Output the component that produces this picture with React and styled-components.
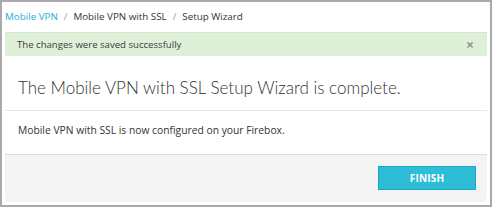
import React from 'react'
import styled, {createGlobalStyle} from 'styled-components'

const GlobalStyle = createGlobalStyle`
  html, body {
    margin: 0;
    padding: 0;
    background: #ffffff;
  }
  * {
    box-sizing: border-box;
  }
`

const Frame = styled.div`
  width: 492px;
  height: 207px;
  border: 2px solid #a9a9a9;
  padding: 0 3px 3px 3px;
  display: flex;
  flex-direction: column;
  font-family: "Open Sans", "Liberation Sans", sans-serif;
  background: #fff;
`

const Breadcrumb = styled.nav`
  height: 30px;
  display: flex;
  align-items: center;
  gap: 6px;
  font-size: 9.8px;
  color: #333;
  padding-bottom: 2px;
`

const Crumb = styled.span`
  color: ${p => (p.link ? '#27aed0' : '#333')};
`

const Sep = styled.span`
  color: #999;
`

const Alert = styled.div`
  height: 24px;
  background: #dff0d8;
  border-top: 1px solid #d2e8c9;
  display: flex;
  align-items: center;
  justify-content: space-between;
  padding: 0 13px 0 12px;
  font-size: 9.6px;
  color: #3a3f3a;
`

const Close = styled.span`
  color: #8e9a8e;
  font-size: 14px;
  font-weight: bold;
  line-height: 1;
`

const Title = styled.h1`
  margin: 0;
  height: 55px;
  display: flex;
  align-items: center;
  padding: 8px 13px 0;
  font-family: "Lato", "Open Sans", sans-serif;
  font-weight: 300;
  font-size: 17px;
  color: #333;
  border-bottom: 1px solid #e6e6e6;
`

const Body = styled.p`
  margin: 0;
  height: 43px;
  display: flex;
  align-items: center;
  padding: 0 13px 5px;
  font-size: 10.3px;
  color: #333;
`

const Footer = styled.div`
  flex: 1;
  background: #f4f4f4;
  border-top: 1px solid #dcdcdc;
  border-radius: 0 0 4px 4px;
  display: flex;
  justify-content: flex-end;
  align-items: flex-start;
  padding: 11px 11px 0;
`

const Button = styled.button`
  width: 98px;
  height: 24px;
  background: #2ebdd6;
  border: 1px solid #15a9c6;
  color: #fff;
  font-family: "Open Sans", sans-serif;
  font-weight: 700;
  font-size: 10px;
  letter-spacing: 0.2px;
  cursor: pointer;
`

export default function App() {
  return (
    <Frame>
      <GlobalStyle />
      <Breadcrumb>
        <Crumb link>Mobile VPN</Crumb>
        <Sep>/</Sep>
        <Crumb>Mobile VPN with SSL</Crumb>
        <Sep>/</Sep>
        <Crumb>Setup Wizard</Crumb>
      </Breadcrumb>
      <Alert>
        <span>The changes were saved successfully</span>
        <Close>×</Close>
      </Alert>
      <Title>The Mobile VPN with SSL Setup Wizard is complete.</Title>
      <Body>Mobile VPN with SSL is now configured on your Firebox.</Body>
      <Footer>
        <Button>FINISH</Button>
      </Footer>
    </Frame>
  )
}
